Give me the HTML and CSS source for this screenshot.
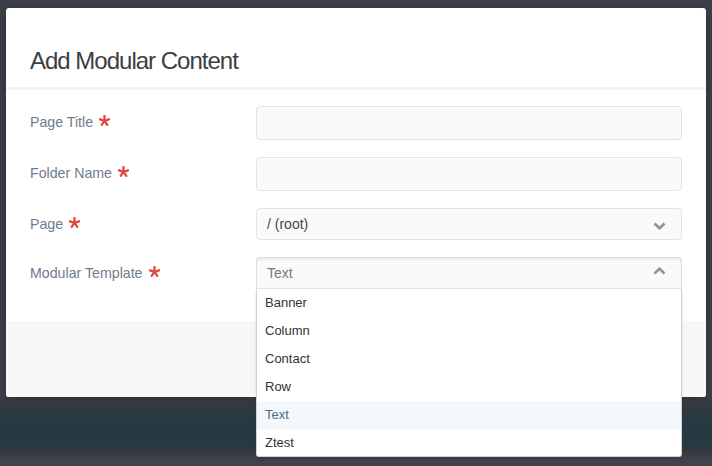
FILE: index.html
```html
<!DOCTYPE html>
<html lang="en">
<head>
<meta charset="utf-8">
<title>Add Modular Content</title>
<link rel="stylesheet" href="styles.css">
</head>
<body>
<div class="modal">
  <div class="modal-header">
    <h1 class="modal-title">Add Modular Content</h1>
  </div>
  <div class="modal-body">
    <div class="form-row">
      <label class="form-label">Page Title<svg class="req" viewBox="0 0 11 11" width="11" height="11"><g stroke="#e2463f" stroke-width="2.3" stroke-linecap="round"><line x1="5.5" y1="5.8" x2="5.5" y2="1"/><line x1="5.5" y1="5.8" x2="10" y2="4.3"/><line x1="5.5" y1="5.8" x2="1" y2="4.3"/><line x1="5.5" y1="5.8" x2="8.3" y2="9.8"/><line x1="5.5" y1="5.8" x2="2.7" y2="9.8"/></g></svg></label>
      <div class="field"><div class="input"></div></div>
    </div>
    <div class="form-row">
      <label class="form-label">Folder Name<svg class="req" viewBox="0 0 11 11" width="11" height="11"><g stroke="#e2463f" stroke-width="2.3" stroke-linecap="round"><line x1="5.5" y1="5.8" x2="5.5" y2="1"/><line x1="5.5" y1="5.8" x2="10" y2="4.3"/><line x1="5.5" y1="5.8" x2="1" y2="4.3"/><line x1="5.5" y1="5.8" x2="8.3" y2="9.8"/><line x1="5.5" y1="5.8" x2="2.7" y2="9.8"/></g></svg></label>
      <div class="field"><div class="input"></div></div>
    </div>
    <div class="form-row">
      <label class="form-label">Page<svg class="req" viewBox="0 0 11 11" width="11" height="11"><g stroke="#e2463f" stroke-width="2.3" stroke-linecap="round"><line x1="5.5" y1="5.8" x2="5.5" y2="1"/><line x1="5.5" y1="5.8" x2="10" y2="4.3"/><line x1="5.5" y1="5.8" x2="1" y2="4.3"/><line x1="5.5" y1="5.8" x2="8.3" y2="9.8"/><line x1="5.5" y1="5.8" x2="2.7" y2="9.8"/></g></svg></label>
      <div class="field">
        <div class="select">
          <span class="select-value">/ (root)</span>
          <svg class="chev chev-down" viewBox="0 0 13 8" width="13" height="8"><polyline points="1.5,1.5 6.5,6.3 11.5,1.5" fill="none" stroke="#8e939c" stroke-width="2.6"/></svg>
        </div>
      </div>
    </div>
    <div class="form-row">
      <label class="form-label">Modular Template<svg class="req" viewBox="0 0 11 11" width="11" height="11"><g stroke="#e2463f" stroke-width="2.3" stroke-linecap="round"><line x1="5.5" y1="5.8" x2="5.5" y2="1"/><line x1="5.5" y1="5.8" x2="10" y2="4.3"/><line x1="5.5" y1="5.8" x2="1" y2="4.3"/><line x1="5.5" y1="5.8" x2="8.3" y2="9.8"/><line x1="5.5" y1="5.8" x2="2.7" y2="9.8"/></g></svg></label>
      <div class="field">
        <div class="select select-open">
          <span class="select-value placeholder">Text</span>
          <svg class="chev chev-up" viewBox="0 0 13 8" width="13" height="8"><polyline points="1.5,6.5 6.5,1.7 11.5,6.5" fill="none" stroke="#8e939c" stroke-width="2.6"/></svg>
        </div>
        <ul class="dropdown">
          <li class="option">Banner</li>
          <li class="option">Column</li>
          <li class="option">Contact</li>
          <li class="option">Row</li>
          <li class="option active">Text</li>
          <li class="option">Ztest</li>
        </ul>
      </div>
    </div>
  </div>
  <div class="modal-footer"></div>
</div>
</body>
</html>
```

FILE: styles.css
```css
html, body {
  margin: 0;
  padding: 0;
}
body {
  width: 712px;
  height: 466px;
  overflow: hidden;
  font-family: "Liberation Sans", Arial, sans-serif;
  background: linear-gradient(to bottom,
    #3c3e47 0,
    #3c3e47 398px,
    #363a43 404px,
    #2c3a42 412px,
    #273a42 420px,
    #273a42 444px,
    #34383f 452px,
    #40414a 458px,
    #42434c 466px);
  padding-top: 8px;
  box-sizing: border-box;
}
.modal {
  margin: 0 6px;
  width: 700px;
  background: #fff;
  border-radius: 3px;
  box-shadow: 0 2px 6px rgba(0,0,0,0.25);
}
.modal-header {
  padding: 39px 24px 12px;
  border-bottom: 3px solid #f4f4f4;
}
.modal-title {
  margin: 0;
  font-size: 24px;
  line-height: 28px;
  font-weight: normal;
  letter-spacing: -1px;
  color: #3d3e42;
}
.modal-body {
  padding: 16px 24px 32px;
  display: flex;
  flex-direction: column;
  gap: 17px;
}
.form-row {
  display: grid;
  grid-template-columns: 226px 1fr;
}
.form-label {
  padding-top: 6px;
  font-size: 14.2px;
  line-height: 20px;
  color: #717c8b;
}
.req {
  margin-left: 6px;
  vertical-align: 1px;
}
.field {
  position: relative;
}
.input {
  height: 34px;
  box-sizing: border-box;
  background: #fafafa;
  border: 1px solid #e3e3e3;
  border-radius: 4px;
}
.select {
  height: 32px;
  box-sizing: border-box;
  background: #fafafa;
  border: 1px solid #e3e3e3;
  border-radius: 4px;
  display: flex;
  align-items: center;
  padding: 0 15px 0 10px;
  font-size: 14px;
  color: #474747;
}
.select-value {
  flex: 1;
  line-height: 20px;
}
.placeholder {
  color: #737b86;
}
.chev-down {
  margin-top: 4px;
}
.chev-up {
  margin-top: -4px;
}
.select-open {
  border-radius: 4px 4px 0 0;
  border-color: #dcdcdc;
  border-bottom-color: #e6e6e6;
  box-shadow: inset 0 2px 2px rgba(0,0,0,0.06);
}
.dropdown {
  position: absolute;
  top: 100%;
  left: 0;
  right: 0;
  margin: 0;
  padding: 0;
  list-style: none;
  background: #fff;
  border: 1px solid #d2d2d2;
  border-top: none;
  border-radius: 0 0 3px 3px;
  box-shadow: 0 2px 3px rgba(0,0,0,0.12);
  z-index: 5;
}
.option {
  height: 28px;
  line-height: 28px;
  padding-left: 8px;
  font-size: 13px;
  color: #333;
}
.option:last-child {
  height: 27px;
}
.option.active {
  background: #f2f8fb;
  color: #56697b;
}
.modal-footer {
  height: 76px;
  background: #f7f7f7;
  border-radius: 0 0 3px 3px;
}
```
